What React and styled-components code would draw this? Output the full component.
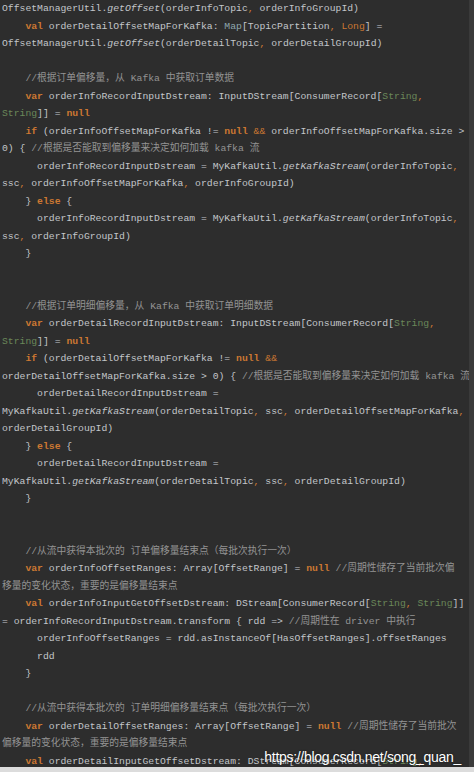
import React from "react";
import styled, { createGlobalStyle } from "styled-components";

const GlobalStyle = createGlobalStyle`
  html, body {
    margin: 0;
    padding: 0;
    background: #2d2d2d;
  }
`;

const Page = styled.div`
  position: relative;
  width: 474px;
  height: 772px;
  display: flex;
  flex-direction: column;
  overflow: hidden;
  background: #2d2d2d;
`;

const Body = styled.div`
  flex: 1;
  display: flex;
  min-height: 0;
`;

const Code = styled.pre`
  flex: 1;
  margin: 0;
  padding: 0 0 0 2px;
  overflow: hidden;
  font-family: "Liberation Mono", "Noto Sans CJK SC", monospace;
  font-size: 9.75px;
  line-height: 17.5px;
  color: #c3c6ca;
`;

const Line = styled.div`
  height: 17.5px;
  white-space: pre;
`;

const RightEdge = styled.div`
  width: 5px;
  background: #3a3a3a;
`;

const BottomEdge = styled.div`
  height: 5px;
  background: #dcdcdc;
`;

const Tok = styled.span`
  color: ${(p) => p.$color || "inherit"};
  font-weight: ${(p) => (p.$bold ? 700 : 400)};
  font-style: ${(p) => (p.$italic ? "italic" : "normal")};
`;

const Watermark = styled.div`
  position: absolute;
  right: 13px;
  bottom: 7px;
  font-family: "Liberation Sans", Arial, sans-serif;
  font-size: 14px;
  letter-spacing: -0.3px;
  color: #ffffff;
  text-shadow: 0 0 2px rgba(0, 0, 0, 0.5);
`;

const source = [
  "OffsetManagerUtil.getOffset(orderInfoTopic, orderInfoGroupId)",
  "    val orderDetailOffsetMapForKafka: Map[TopicPartition, Long] =",
  "OffsetManagerUtil.getOffset(orderDetailTopic, orderDetailGroupId)",
  "",
  "    //根据订单偏移量，从 Kafka 中获取订单数据",
  "    var orderInfoRecordInputDstream: InputDStream[ConsumerRecord[String,",
  "String]] = null",
  "    if (orderInfoOffsetMapForKafka != null && orderInfoOffsetMapForKafka.size >",
  "0) { //根据是否能取到偏移量来决定如何加载 kafka 流",
  "      orderInfoRecordInputDstream = MyKafkaUtil.getKafkaStream(orderInfoTopic,",
  "ssc, orderInfoOffsetMapForKafka, orderInfoGroupId)",
  "    } else {",
  "      orderInfoRecordInputDstream = MyKafkaUtil.getKafkaStream(orderInfoTopic,",
  "ssc, orderInfoGroupId)",
  "    }",
  "",
  "",
  "    //根据订单明细偏移量，从 Kafka 中获取订单明细数据",
  "    var orderDetailRecordInputDstream: InputDStream[ConsumerRecord[String,",
  "String]] = null",
  "    if (orderDetailOffsetMapForKafka != null &&",
  "orderDetailOffsetMapForKafka.size > 0) { //根据是否能取到偏移量来决定如何加载 kafka 流",
  "      orderDetailRecordInputDstream =",
  "MyKafkaUtil.getKafkaStream(orderDetailTopic, ssc, orderDetailOffsetMapForKafka,",
  "orderDetailGroupId)",
  "    } else {",
  "      orderDetailRecordInputDstream =",
  "MyKafkaUtil.getKafkaStream(orderDetailTopic, ssc, orderDetailGroupId)",
  "    }",
  "",
  "",
  "    //从流中获得本批次的 订单偏移量结束点（每批次执行一次）",
  "    var orderInfoOffsetRanges: Array[OffsetRange] = null //周期性储存了当前批次偏",
  "移量的变化状态，重要的是偏移量结束点",
  "    val orderInfoInputGetOffsetDstream: DStream[ConsumerRecord[String, String]]",
  "= orderInfoRecordInputDstream.transform { rdd => //周期性在 driver 中执行",
  "      orderInfoOffsetRanges = rdd.asInstanceOf[HasOffsetRanges].offsetRanges",
  "      rdd",
  "    }",
  "",
  "    //从流中获得本批次的 订单明细偏移量结束点（每批次执行一次）",
  "    var orderDetailOffsetRanges: Array[OffsetRange] = null //周期性储存了当前批次",
  "偏移量的变化状态，重要的是偏移量结束点",
  "    val orderDetailInputGetOffsetDstream: DStream[ConsumerRecord[String,",
];

// lines that are the wrapped tail of a comment
const commentTails = new Set([33, 42]);

const ORANGE = "#cc7832";
const GREEN = "#6a8759";
const GRAY = "#939393";

const pattern =
  /(\/\/.*$)|\b(val|var|null|if|else)\b|\b(String)\b|\b(Long)\b|\b(Map)\b|\b(getOffset|getKafkaStream)\b|(&&)|(,)/g;

function tokenize(text) {
  const out = [];
  let last = 0;
  let m;
  pattern.lastIndex = 0;
  while ((m = pattern.exec(text))) {
    if (m.index > last) out.push({ t: text.slice(last, m.index) });
    if (m[1]) out.push({ t: m[1], color: GRAY });
    else if (m[2]) out.push({ t: m[2], color: ORANGE, bold: true });
    else if (m[3]) out.push({ t: m[3], color: GREEN });
    else if (m[4]) out.push({ t: m[4], color: ORANGE });
    else if (m[5]) out.push({ t: m[5], color: "#8fa7ad" });
    else if (m[6]) out.push({ t: m[6], italic: true });
    else if (m[7]) out.push({ t: m[7], color: ORANGE });
    else if (m[8]) out.push({ t: m[8], color: ORANGE });
    last = m.index + m[0].length;
  }
  if (last < text.length) out.push({ t: text.slice(last) });
  return out;
}

const CodeLine = ({ text, index }) => {
  if (commentTails.has(index)) {
    return (
      <Line>
        <Tok $color={GRAY}>{text}</Tok>
      </Line>
    );
  }
  return (
    <Line>
      {tokenize(text).map((tk, i) => (
        <Tok key={i} $color={tk.color} $bold={tk.bold} $italic={tk.italic}>
          {tk.t}
        </Tok>
      ))}
    </Line>
  );
};

const App = () => {
  return (
    <>
      <GlobalStyle />
      <Page>
        <Body>
          <Code>
            {source.map((text, i) => (
              <CodeLine key={i} text={text} index={i} />
            ))}
          </Code>
          <RightEdge />
        </Body>
        <BottomEdge />
        <Watermark>https://blog.csdn.net/song_quan_</Watermark>
      </Page>
    </>
  );
};

export default App;
